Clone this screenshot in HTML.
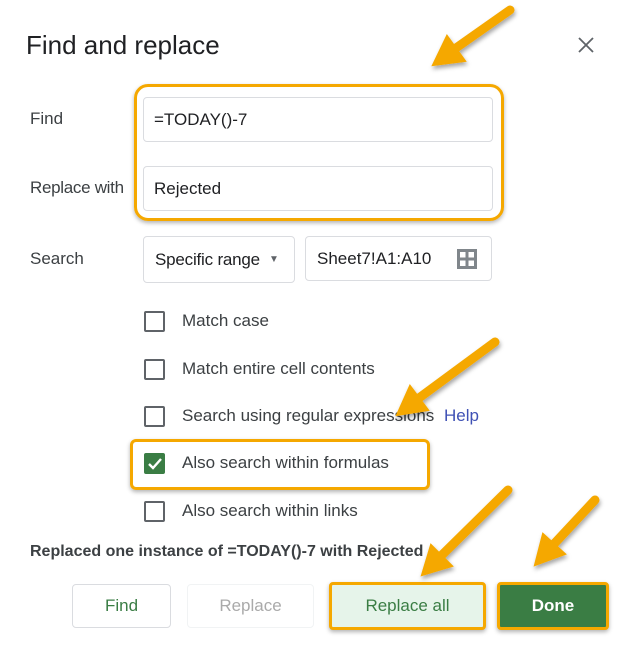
<!DOCTYPE html>
<html><head><style>
body{margin:0;width:623px;height:653px;background:#fff;position:relative;overflow:hidden;font-family:"Liberation Sans",Arial,sans-serif;color:#3c4043}
.a{position:absolute}
.lbl{font-size:17px;color:#3c4043}
.inp{position:absolute;border:1px solid #dadce0;border-radius:4px;background:#fff;box-sizing:border-box;font-size:17px;color:#202124;padding-left:10px;display:flex;align-items:center;white-space:nowrap}
.cb{position:absolute;left:144px;width:17px;height:17px;border:2px solid #5f6368;border-radius:2px}
.ct{position:absolute;left:182px;font-size:17px;color:#3c4043}
.btn{position:absolute;box-sizing:border-box;border-radius:4px;display:flex;align-items:center;justify-content:center;font-size:17px}
.ob{position:absolute;border:3px solid #f5a800;box-sizing:border-box;box-shadow:0 2px 4px rgba(0,0,0,.3)}
</style></head><body>
<div class="a" style="left:26px;top:30px;font-size:26px;color:#202124">Find and replace</div>
<svg class="a" style="left:578px;top:37px" width="16" height="16" viewBox="0 0 16 16"><path d="M1 1L15 15M15 1L1 15" stroke="#5f6368" stroke-width="1.8"/></svg>

<div class="a lbl" style="left:30px;top:109px">Find</div>
<div class="a lbl" style="left:30px;top:178px;letter-spacing:-0.3px">Replace with</div>
<div class="a lbl" style="left:30px;top:249px">Search</div>

<div class="inp" style="left:143px;top:97px;width:350px;height:45px">=TODAY()-7</div>
<div class="inp" style="left:143px;top:166px;width:350px;height:45px">Rejected</div>
<div class="ob" style="left:134px;top:84px;width:370px;height:137px;border-radius:14px"></div>

<div class="inp" style="left:143px;top:236px;width:152px;height:47px;padding-left:11px;font-size:17px;letter-spacing:-0.2px">Specific range <span style="font-size:10px;margin-left:9px;color:#5f6368">▼</span></div>
<div class="inp" style="left:305px;top:236px;width:187px;height:45px;padding-left:11px">Sheet7!A1:A10
<svg style="position:absolute;right:14px;top:12px" width="20" height="20" viewBox="0 0 20 20"><rect x="1.5" y="1.5" width="17" height="17" fill="none" stroke="#80868b" stroke-width="3"/><path d="M10 1v18M1 10h18" stroke="#80868b" stroke-width="3"/></svg></div>

<div class="cb" style="top:311px"></div><div class="ct" style="top:311px">Match case</div>
<div class="cb" style="top:359px"></div><div class="ct" style="top:359px">Match entire cell contents</div>
<div class="cb" style="top:406px"></div><div class="ct" style="top:406px">Search using regular expressions <span style="color:#3f51b5;margin-left:5px">Help</span></div>
<div class="cb" style="top:453px;background:#3a7d44;border-color:#3a7d44"><svg width="17" height="17" viewBox="0 0 17 17"><path d="M3 9l4 4 8-9" fill="none" stroke="#fff" stroke-width="2.4"/></svg></div><div class="ct" style="top:453px">Also search within formulas</div>
<div class="ob" style="left:130px;top:439px;width:300px;height:51px;border-radius:6px"></div>
<div class="cb" style="top:501px"></div><div class="ct" style="top:501px">Also search within links</div>

<div class="a" style="left:30px;top:543px;font-size:16px;font-weight:bold;color:#3c4043">Replaced one instance of =TODAY()-7 with Rejected</div>

<div class="btn" style="left:72px;top:584px;width:99px;height:44px;border:1px solid #dadce0;color:#3a7d44">Find</div>
<div class="btn" style="left:187px;top:584px;width:127px;height:44px;border:1px solid #f1f3f4;color:#aaa">Replace</div>
<div class="btn" style="left:329px;top:582px;width:157px;height:48px;border:3px solid #f5a800;background:#e6f4ea;color:#3a7d44;box-shadow:0 2px 4px rgba(0,0,0,.3)">Replace all</div>
<div class="btn" style="left:497px;top:582px;width:112px;height:48px;border:3px solid #f5a800;background:#3a7d44;color:#fff;font-weight:bold;box-shadow:0 2px 4px rgba(0,0,0,.3)">Done</div>

<svg class="a" style="left:0;top:0" width="623" height="653">
<defs><filter id="s"><feDropShadow dx="1" dy="3" stdDeviation="2" flood-opacity=".35"/></filter></defs>
<g fill="#f5a800" stroke="#f5a800" stroke-width="9" stroke-linecap="round" filter="url(#s)">
<line x1="510" y1="10" x2="456" y2="48"/><polygon stroke-width="2" points="433,65 447,36 465,61"/>
<line x1="495" y1="342" x2="419" y2="398"/><polygon stroke-width="2" points="397,415 410,386 428,410"/>
<line x1="508" y1="490" x2="442" y2="555"/><polygon stroke-width="2" points="422,575 431,545 452,566"/>
<line x1="595" y1="500" x2="554" y2="544"/><polygon stroke-width="2" points="535,565 543,534 565,554"/>
</g></svg>
</body></html>
